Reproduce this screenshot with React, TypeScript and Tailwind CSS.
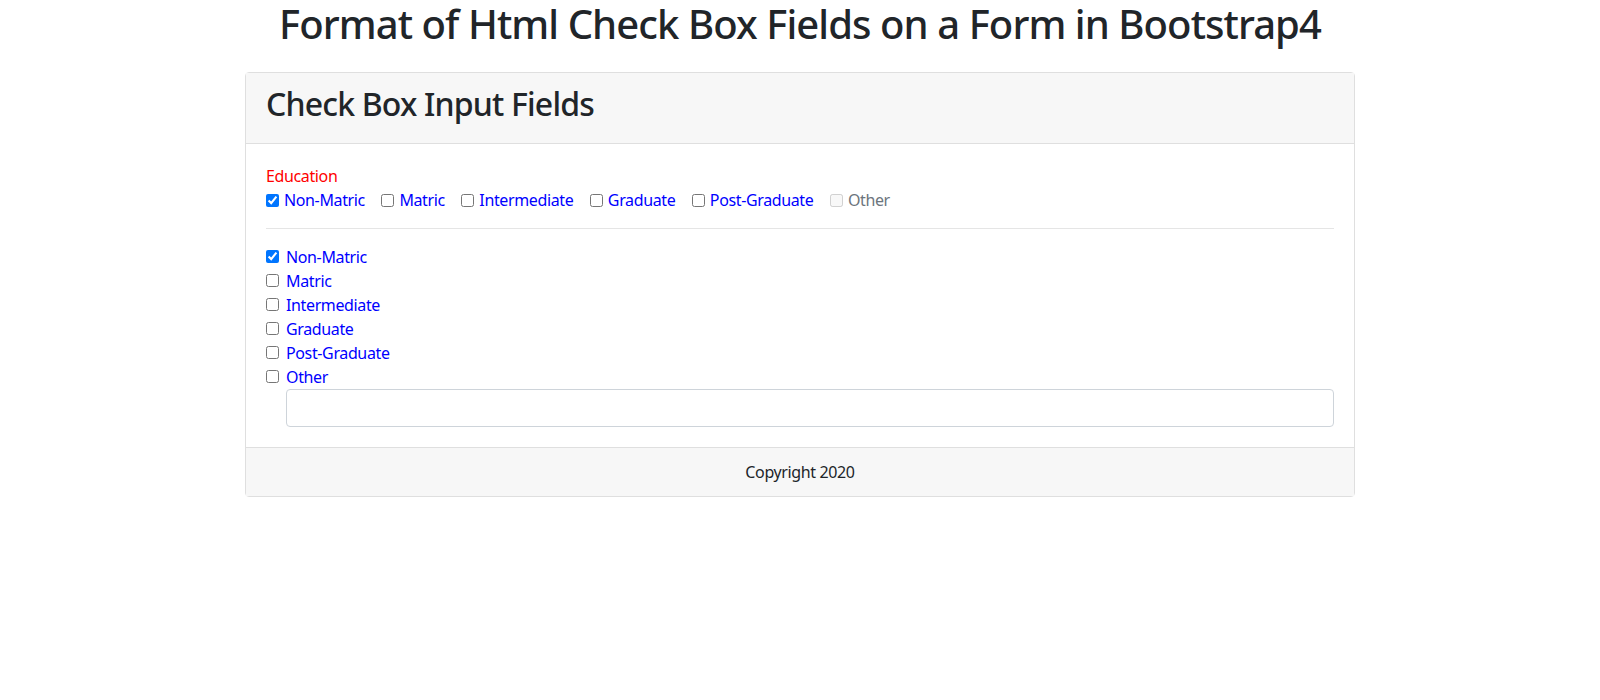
import React from 'react';

const options = ['Non-Matric', 'Matric', 'Intermediate', 'Graduate', 'Post-Graduate'];

const App: React.FC = () => {
  return (
    <div className="min-h-[700px] bg-white font-['Segoe_UI','Noto_Sans',sans-serif] text-base leading-6 tracking-[-0.37px] text-[#212529]">
      <div className="mx-auto w-[1140px] px-[15px]">
        <h1 className="mb-2 text-center text-[40px] font-medium leading-[48px] tracking-[-0.92px]">
          Format of Html Check Box Fields on a Form in Bootstrap4
        </h1>

        <div className="mt-6 rounded border border-[#dfdfdf]">
          <div className="border-b border-[#dfdfdf] bg-[#f7f7f7] px-5 py-3">
            <h2 className="mb-2 text-[32px] font-medium leading-[38.4px] tracking-[-0.82px]">Check Box Input Fields</h2>
          </div>

          <div className="p-5">
            <div className="text-[#ff0000]">Education</div>
            <div className="flex items-center">
              {options.map((opt, i) => (
                <label key={opt} className="mr-[16.5px] flex items-center">
                  <input type="checkbox" defaultChecked={i === 0} className="m-0 mr-[5px] h-[13px] w-[13px]" />
                  <span className="text-[#0000ff]">{opt}</span>
                </label>
              ))}
              <label className="flex items-center">
                <input type="checkbox" disabled className="m-0 mr-[5px] h-[13px] w-[13px]" />
                <span className="text-[#6c757d]">Other</span>
              </label>
            </div>

            <hr className="my-4 border-t border-[#e5e5e5]" />

            {[...options, 'Other'].map((opt, i) => (
              <label key={opt} className="flex items-start">
                <input type="checkbox" defaultChecked={i === 0} className="m-0 mr-[7px] mt-[4.8px] h-[13px] w-[13px]" />
                <span className="text-[#0000ff]">{opt}</span>
              </label>
            ))}
            <input type="text" className="ml-5 block h-[38px] w-[calc(100%-20px)] rounded border border-[#ced4da] px-3" />
          </div>

          <div className="border-t border-[#dfdfdf] bg-[#f7f7f7] px-5 py-3 text-center">Copyright 2020</div>
        </div>
      </div>
    </div>
  );
};

export default App;
